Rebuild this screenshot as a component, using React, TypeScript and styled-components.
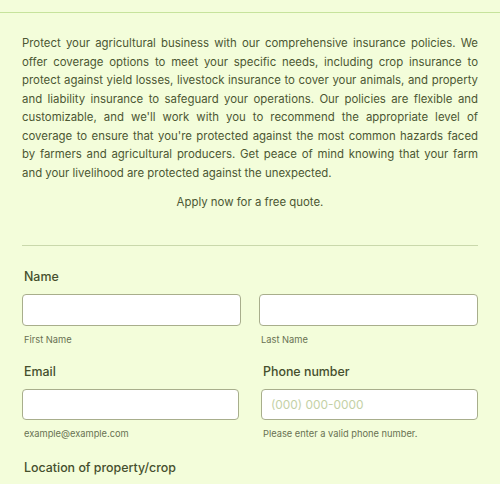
import React from "react";
import styled, { createGlobalStyle } from "styled-components";

const Global = createGlobalStyle`
  body {
    margin: 0;
    background: #f3fdda;
    font-family: Inter, "Noto Sans", sans-serif;
  }
`;

const Page = styled.div`
  border-top: 1px solid #c6e39c;
  margin-top: 12px;
  padding: 21px 22px 0;
  color: #4c5733;
`;

const Intro = styled.p`
  margin: 0;
  font-size: 11.4px;
  line-height: 18.5px;
  text-align: justify;
`;

const Apply = styled.p`
  margin: 11px 0 0;
  font-size: 11.4px;
  line-height: 18.5px;
  text-align: center;
`;

const Divider = styled.hr`
  border: none;
  border-top: 1px solid #c9d8ab;
  margin: 33px 0 22px;
`;

const Row = styled.div<{ $gap: number; $after: number }>`
  display: grid;
  grid-template-columns: minmax(0, 1fr) minmax(0, 1fr);
  column-gap: ${(p) => p.$gap}px;
  margin-bottom: ${(p) => p.$after}px;
`;

const Field = styled.div`
  display: flex;
  flex-direction: column;
  min-width: 0;
`;

const Label = styled.label`
  font-size: 12.4px;
  font-weight: 500;
  color: #454f2d;
  margin: 0 0 8px 2px;
  line-height: 18px;
  min-height: 18px;
`;

const Input = styled.input<{ $h: number }>`
  box-sizing: border-box;
  width: 100%;
  height: ${(p) => p.$h}px;
  border: 1px solid #a8ae8c;
  border-radius: 4px;
  background: #fff;
  padding: 0 9px;
  font-family: inherit;
  font-size: 11.9px;
  color: #434d2c;
  &::placeholder {
    color: #c4d1a6;
  }
`;

const Sub = styled.span`
  font-size: 9.3px;
  line-height: 12px;
  color: #687152;
  margin: 8px 0 0 2px;
`;

export default function App() {
  return (
    <>
      <Global />
      <Page>
        <Intro>
          Protect your agricultural business with our comprehensive insurance
          policies. We offer coverage options to meet your specific needs,
          including crop insurance to protect against yield losses, livestock
          insurance to cover your animals, and property and liability insurance
          to safeguard your operations. Our policies are flexible and
          customizable, and we'll work with you to recommend the appropriate
          level of coverage to ensure that you're protected against the most
          common hazards faced by farmers and agricultural producers. Get peace
          of mind knowing that your farm and your livelihood are protected
          against the unexpected.
        </Intro>
        <Apply>Apply now for a free quote.</Apply>
        <Divider />
        <Row $gap={18} $after={17}>
          <Field>
            <Label>Name</Label>
            <Input $h={32} />
            <Sub>First Name</Sub>
          </Field>
          <Field>
            <Label></Label>
            <Input $h={32} />
            <Sub>Last Name</Sub>
          </Field>
        </Row>
        <Row $gap={22} $after={16}>
          <Field>
            <Label>Email</Label>
            <Input $h={31} />
            <Sub>example@example.com</Sub>
          </Field>
          <Field>
            <Label>Phone number</Label>
            <Input $h={31} placeholder="(000) 000-0000" />
            <Sub>Please enter a valid phone number.</Sub>
          </Field>
        </Row>
        <Label>Location of property/crop</Label>
      </Page>
    </>
  );
}
